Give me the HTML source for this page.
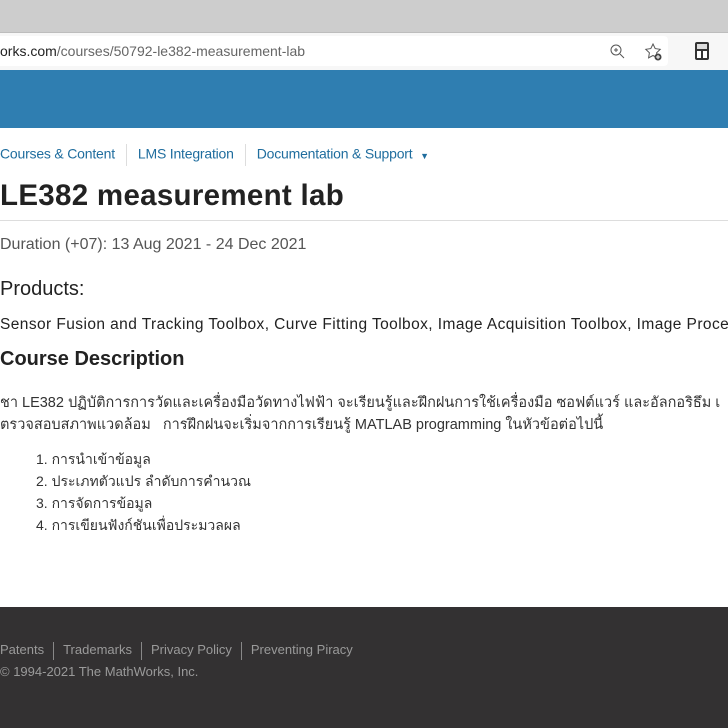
<!DOCTYPE html>
<html style="overflow:hidden"><head><meta charset="utf-8"><style>
*{margin:0;padding:0;box-sizing:border-box}
body{width:728px;height:728px;overflow:hidden;background:#fff;font-family:"Liberation Sans",sans-serif;color:#333;position:relative}
#w{position:absolute;left:0;top:0;width:728px;height:728px;overflow:hidden}
.abs{position:absolute;white-space:nowrap}
</style></head><body><div id="w">
<div class="abs" style="left:0;top:0;width:728px;height:32px;background:#cdcdcd"></div>
<div class="abs" style="left:0;top:32px;width:728px;height:38px;background:#f7f7f7;border-top:1px solid #bdbdbd"></div>
<div class="abs" style="left:0;top:36px;width:668px;height:30px;background:#fff;border-radius:0 4px 4px 0"></div>
<div class="abs" style="left:0;top:42px;font-size:14px;color:#666;line-height:18px"><span style="color:#222">orks.com</span>/courses/50792-le382-measurement-lab</div>
<svg class="abs" style="left:609px;top:43px" width="16" height="16" viewBox="0 0 16 16"><circle cx="7" cy="7" r="5" fill="none" stroke="#555" stroke-width="1"/><path d="M11 11l4 4M5 7h4M7 5v4" stroke="#555" stroke-width="1"/></svg>
<svg class="abs" style="left:644px;top:42px" width="20" height="20" viewBox="0 0 20 20"><path d="M9 2l2.2 4.6 5 .7-3.6 3.5.8 5L9 13.5 4.6 15.8l.8-5L1.8 7.3l5-.7z" fill="none" stroke="#555" stroke-width="1"/><circle cx="14" cy="15" r="3.5" fill="#444"/><path d="M14 13v4M12 15h4" stroke="#fff" stroke-width="1"/></svg>
<svg class="abs" style="left:694px;top:41px" width="16" height="20" viewBox="0 0 16 20"><rect x="1" y="1" width="14" height="18" rx="2" fill="#333"/><rect x="3" y="3" width="10" height="5" fill="#ddd"/><rect x="3" y="10" width="4" height="7" fill="#fff"/><rect x="9" y="10" width="4" height="7" fill="#fff"/></svg>
<div class="abs" style="left:0;top:70px;width:728px;height:58px;background:#2f7eb1"></div>
<div class="abs" style="left:0;top:144px;font-size:14px;color:#1f6d9e;line-height:18px;letter-spacing:-0.2px">Courses &amp; Content<span style="display:inline-block;width:1px;height:22px;background:#ddd;vertical-align:middle;margin:0 11px"></span>LMS Integration<span style="display:inline-block;width:1px;height:22px;background:#ddd;vertical-align:middle;margin:0 11px"></span>Documentation &amp; Support <span style="font-size:9px;margin-left:4px">▼</span></div>
<div class="abs" style="left:0;top:178px;font-size:29.5px;font-weight:bold;color:#222;line-height:36px;letter-spacing:0.3px">LE382 measurement lab</div>
<div class="abs" style="left:0;top:220px;width:728px;height:1px;background:#ddd"></div>
<div class="abs" style="left:0;top:235px;font-size:16px;color:#555;line-height:20px">Duration (+07): 13 Aug 2021 - 24 Dec 2021</div>
<div class="abs" style="left:0;top:277px;font-size:20px;color:#222;line-height:24px">Products:</div>
<div class="abs" style="left:0;top:315px;font-size:15.5px;color:#222;line-height:19px;letter-spacing:0.42px">Sensor Fusion and Tracking Toolbox, Curve Fitting Toolbox, Image Acquisition Toolbox, Image Proce</div>
<div class="abs" style="left:0;top:347px;font-size:20px;font-weight:bold;color:#222;line-height:24px">Course Description</div>
<div class="abs" style="left:0;top:392px;font-size:14.5px;color:#333;line-height:22px">ิชา LE382 ปฏิบัติการการวัดและเครื่องมือวัดทางไฟฟ้า จะเรียนรู้และฝึกฝนการใช้เครื่องมือ ซอฟต์แวร์ และอัลกอริธึม เ<br>ตรวจสอบสภาพแวดล้อม &nbsp; การฝึกฝนจะเริ่มจากการเรียนรู้ MATLAB programming ในหัวข้อต่อไปนี้</div>
<div class="abs" style="left:36px;top:448px;font-size:14px;color:#333;line-height:22px">1. การนำเข้าข้อมูล<br>2. ประเภทตัวแปร ลำดับการคำนวณ<br>3. การจัดการข้อมูล<br>4. การเขียนฟังก์ชันเพื่อประมวลผล</div>
<div class="abs" style="left:0;top:607px;width:728px;height:121px;background:#333132"></div>
<div class="abs" style="left:0;top:641px;font-size:13px;color:#9a9a9a;line-height:17px">Patents<span style="display:inline-block;width:1px;height:18px;background:#888;vertical-align:middle;margin:0 9px"></span>Trademarks<span style="display:inline-block;width:1px;height:18px;background:#888;vertical-align:middle;margin:0 9px"></span>Privacy Policy<span style="display:inline-block;width:1px;height:18px;background:#888;vertical-align:middle;margin:0 9px"></span>Preventing Piracy</div>
<div class="abs" style="left:0;top:663px;font-size:13px;color:#9a9a9a;line-height:17px">© 1994-2021 The MathWorks, Inc.</div>
</div></body></html>
